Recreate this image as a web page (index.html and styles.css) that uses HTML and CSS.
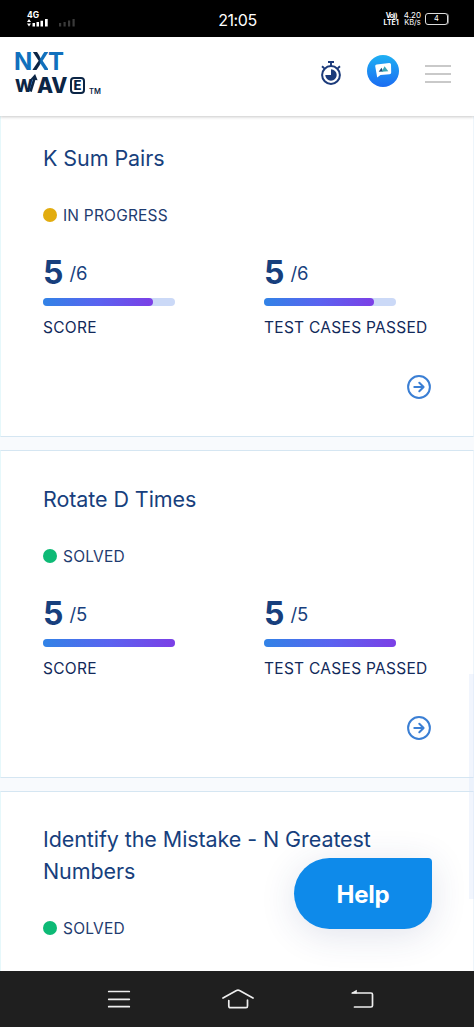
FILE: index.html
```html
<!DOCTYPE html>
<html lang="en">
<head>
  <meta charset="UTF-8">
  <title>NxtWave</title>
  <link rel="stylesheet" href="styles.css">
</head>
<body>

<div class="statusbar">
  <div class="signals">
    <div class="sim">
      <span class="net">4G</span>
      <svg width="22" height="8" viewBox="0 0 22 8" fill="#fff">
        <path d="M0 3 L2 0 L4 3Z M0 4.5 L2 7.5 L4 4.5Z"/>
        <path d="M5.5 4h2.500v3.500h-2.500z M9.500 3h2.500v4.500h-2.500z M13.500 1.800h2.500v5.700h-2.500z M18 0h2.700v7.500h-2.700z"/>
      </svg>
    </div>
    <svg class="sim2" width="17" height="8" viewBox="0 0 17 8" fill="#3a3a3a">
      <path d="M0 4h2.200v3.500h-2.200z M4.500 3h2.200v4.500h-2.200z M9 1.600h2.200v5.900h-2.200z M13.500 0h2.200v7.500h-2.200z"/>
    </svg>
  </div>
  <div class="time">21:05</div>
  <div class="right">
    <div class="volte"><span>Vo&#41;&#41;</span><span>LTE1</span></div>
    <div class="speed"><span>4.20</span><span>KB/s</span></div>
    <div class="battery">4</div>
  </div>
</div>

<header class="header">
  <div class="logo">
    <div class="logo-nxt">N<span class="logo-x">X</span>T</div>
    <div class="logo-wave">
      <span class="logo-w">W</span>
      <svg class="logo-arrow" width="9" height="19" viewBox="0 0 9 19"><path d="M1.500 17.500 L5.600 4" stroke="#0b2545" stroke-width="2.600" fill="none"/><path d="M1.400 5.200 L6.100 0 L8.600 6.200Z" fill="#0b2545"/></svg>
      <span class="logo-av">AV</span>
      <span class="logo-e">E</span>
      <span class="tm">TM</span>
    </div>
  </div>
  <div class="actions">
    <svg class="timer" width="22" height="26" viewBox="0 0 22 26">
      <circle cx="11" cy="15" r="8.900" fill="none" stroke="#1b3a7a" stroke-width="2"/>
      <path d="M11 9.300 V15 H5.300 A5.700 5.700 0 1 0 11 9.300Z" fill="#1b3a7a"/>
      <path d="M8 2h6 M11 2v4 M2 6.200l2.200 2 M20 6.200l-2.200 2" stroke="#1b3a7a" stroke-width="1.900" fill="none"/>
    </svg>
    <svg class="chat" width="32" height="32" viewBox="0 0 32 32">
      <defs>
        <linearGradient id="chatBg" x1="0" y1="0" x2="0" y2="1">
          <stop offset="0" stop-color="#1fb0f3"/>
          <stop offset="1" stop-color="#1b6cf2"/>
        </linearGradient>
      </defs>
      <circle cx="16" cy="16" r="16" fill="url(#chatBg)"/>
      <path d="M9.700 9.400 L22.200 7.900 Q24 7.800 24 9.500 L24.200 17.500 Q24.200 19.200 22.500 19.300 L13.500 19.900 L10.200 22.400 L8.200 11.200 Q8 9.700 9.700 9.400Z" fill="#fff"/>
      <path d="M11.700 16.800 L14.500 12.700 L16.200 16.500Z" fill="#1b4a7a"/>
      <path d="M14.500 16.700 L17.600 11.200 L21.300 16.200Z" fill="#3aa6b4"/>
    </svg>
    <div class="burger"><i></i><i></i><i></i></div>
  </div>
</header>

<main class="list">
  <section class="card">
    <h2>K Sum Pairs</h2>
    <div class="status"><span class="dot progress"></span>IN PROGRESS</div>
    <div class="stats">
      <div class="stat">
        <div class="num"><b>5</b><span>/6</span></div>
        <div class="bar"><div class="fill" style="width:83.33%"></div></div>
        <div class="label">SCORE</div>
      </div>
      <div class="stat">
        <div class="num"><b>5</b><span>/6</span></div>
        <div class="bar"><div class="fill" style="width:83.33%"></div></div>
        <div class="label">TEST CASES PASSED</div>
      </div>
    </div>
    <svg class="go" width="24" height="24" viewBox="0 0 24 24">
      <circle cx="12" cy="12" r="10.900"/>
      <path d="M7.300 12h9.200 M12.300 7.700 L16.600 12 L12.300 16.300"/>
    </svg>
  </section>

  <section class="card">
    <h2>Rotate D Times</h2>
    <div class="status"><span class="dot solved"></span>SOLVED</div>
    <div class="stats">
      <div class="stat">
        <div class="num"><b>5</b><span>/5</span></div>
        <div class="bar"><div class="fill" style="width:100%"></div></div>
        <div class="label">SCORE</div>
      </div>
      <div class="stat">
        <div class="num"><b>5</b><span>/5</span></div>
        <div class="bar"><div class="fill" style="width:100%"></div></div>
        <div class="label">TEST CASES PASSED</div>
      </div>
    </div>
    <svg class="go" width="24" height="24" viewBox="0 0 24 24">
      <circle cx="12" cy="12" r="10.900"/>
      <path d="M7.300 12h9.200 M12.300 7.700 L16.600 12 L12.300 16.300"/>
    </svg>
  </section>

  <section class="card last">
    <h2><span>Identify the Mistake - N Greatest</span> <span>Numbers</span></h2>
    <div class="status"><span class="dot solved"></span>SOLVED</div>
  </section>

  <div class="scrollbar"></div>
  <button class="help">Help</button>
</main>

<nav class="navbar">
  <svg width="24" height="20" viewBox="0 0 24 20"><path d="M1.700 2.500h20.600 M1.700 10.300h20.600 M1.700 17.700h20.600"/></svg>
  <svg width="32" height="20" viewBox="0 0 32 20"><path d="M1 9 L14.500 1.500 Q16 .8 17.500 1.500 L31 9 M6.800 11.500 V17 Q6.800 18.700 8.500 18.700 H24 Q25.500 18.700 25.500 17 V11"/></svg>
  <svg width="24" height="20" viewBox="0 0 24 20"><path d="M2.500 4 H21 Q22.500 4 22.500 5.500 V16.500 Q22.500 18 21 18 H4.500"/><path class="tip" d="M.8 4.300 L6.800 .8 V4.500Z"/></svg>
</nav>

</body>
</html>
```
FILE: styles.css
```css
* { box-sizing: border-box; }
body { margin: 0; height: 1027px; overflow: hidden; display: flex; flex-direction: column; font-family: Inter, sans-serif; background: #f8fafd; }

/* phone status bar */
.statusbar { height: 37px; flex: none; background: #000; color: #fff; display: grid; grid-template-columns: 1fr auto 1fr; align-items: center; padding: 0 26px 0 27px; }
.signals { display: flex; align-items: flex-end; gap: 10px; padding-top: 1px; }
.sim { display: flex; flex-direction: column; width: 22px; }
.net { font-size: 8.5px; font-weight: 700; line-height: 7px; }
.time { font-size: 16px; line-height: 20px; padding-top: 2px; letter-spacing: -0.4px; }
.right { display: flex; justify-content: flex-end; align-items: center; padding-top: 1px; }
.volte, .speed { display: flex; flex-direction: column; font-size: 7.5px; line-height: 7.500px; align-items: center; }
.volte { font-weight: 700; font-size: 7px; line-height: 7px; }
.volte span:first-child { letter-spacing: -0.8px; }
.speed { margin: 0 4px 0 5px; }
.speed span:first-child { font-size: 8px; }
.battery { width: 23px; height: 12px; border: 1px solid #ddd; border-radius: 3px; font-size: 7.5px; line-height: 10px; text-align: center; box-shadow: 1px 0 0 -0.3px #aaa; }

/* site header */
.header { height: 79px; flex: none; background: #fff; display: flex; justify-content: space-between; align-items: flex-start; padding: 15px 23px 0 14px; box-shadow: 0 1px 3px rgba(0, 0, 0, 0.22); position: relative; z-index: 2; }
.logo { color: #0b2545; }
.logo-nxt { font-size: 24px; line-height: 20px; font-weight: 700; color: #1170bd; letter-spacing: -0.6px; }
.logo-x { background: linear-gradient(90deg, #0b2545 45%, #1170bd 55%); -webkit-background-clip: text; color: transparent; }
.logo-wave { display: flex; align-items: flex-end; font-size: 21px; font-weight: 800; line-height: 20px; height: 24px; padding-left: 1px; }
.logo-w { font-size: 17px; font-weight: 800; line-height: 20px; width: 18px; }
.logo-arrow { margin: 0 -1px 3px -4px; }
.logo-av { width: 32px; letter-spacing: -0.1px; }
.logo-e { width: 15px; height: 17px; border: 2px solid #0b2545; border-radius: 4px; font-size: 13px; font-weight: 800; line-height: 13px; text-align: center; margin: 0 0 2px 1px; }
.tm { font-size: 7.5px; font-weight: 600; line-height: 8px; margin: 0 0 0 4px; }
.actions { display: flex; align-items: flex-start; padding-top: 3px; }
.timer { margin-top: 5px; }
.chat { margin-left: 25px; }
.burger { margin: 10px 0 0 26px; width: 26px; display: flex; flex-direction: column; gap: 6px; }
.burger i { height: 2px; background: #c9c9c9; }

/* problem cards */
.list { flex: 1; min-height: 0; overflow: hidden; position: relative; margin-top: -7px; }
.card { height: 328px; background: #fff; border: 1px solid #d5e6f2; border-left-color: #e6f8fb; border-right-color: #eef5fb; margin-bottom: 13px; padding: 32px 42px 0 42px; display: flex; flex-direction: column; color: #173f7d; }
.last { padding-top: 31px; }
h2 { margin: 0; font-size: 21.5px; font-weight: 400; line-height: 32px; letter-spacing: -0.08px; }
.status { display: flex; align-items: center; gap: 6px; height: 20px; margin-top: 31px; font-size: 15.500px; letter-spacing: 0.2px; color: #1f3c70; }
.dot { width: 14px; height: 14px; border-radius: 50%; }
.progress { background: #e2ac0e; }
.solved { background: #0dba76; }
.stats { display: grid; grid-template-columns: 221px 1fr; margin-top: 29px; }
.num { display: flex; align-items: center; line-height: 38px; height: 38px; }
.num b { font-size: 32px; }
.num span { font-size: 18.500px; margin-left: 6px; }
.bar { width: 132px; height: 8px; border-radius: 4px; background: #cbd9f7; margin-top: 6px; }
.fill { height: 8px; border-radius: 4px; background: linear-gradient(90deg, #3183e6, #5a63f0 50%, #7c3fe6); }
.label { font-size: 15.500px; line-height: 20px; letter-spacing: 0.28px; margin-top: 12px; color: #12295a; white-space: nowrap; }
.go { align-self: flex-end; margin-top: 37px; fill: none; stroke: #3b7fd4; stroke-width: 2; stroke-linecap: round; stroke-linejoin: round; }

.scrollbar { position: absolute; right: 0; top: 565px; width: 5px; height: 225px; background: rgba(215, 225, 248, 0.35); }
.help { position: absolute; right: 42px; bottom: 42px; width: 138px; height: 71px; border: 0; border-radius: 36px 4px 28px 36px; background: #0e8aea; color: #fff; font: 700 24px Inter, sans-serif; letter-spacing: -0.2px; padding-top: 3px; box-shadow: 0 6px 36px rgba(40, 60, 120, 0.14); }

/* android nav */
.navbar { height: 56px; flex: none; background: #1f1f1f; display: grid; grid-template-columns: 115px 113px 24px; align-items: center; padding: 0 0 0 107px; position: relative; }
.navbar svg { fill: none; stroke: #eee; stroke-width: 1.700; stroke-linecap: round; }
.navbar .tip { fill: #eee; stroke: none; }
.navbar svg:last-child { margin-left: 15px; }
```
